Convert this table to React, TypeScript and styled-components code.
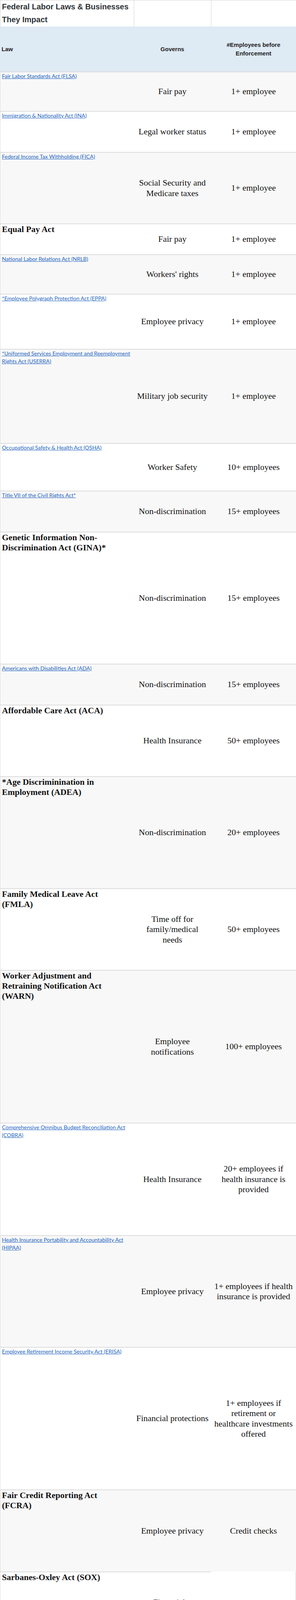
import { createGlobalStyle, styled } from "styled-components";

const GlobalStyle = createGlobalStyle`
  * { box-sizing: border-box; }
  html, body {
    margin: 0;
    padding: 0;
    background: #fff;
  }
`;

type Law = {
  name: string;
  link?: boolean;
  governs: string;
  count?: string;
  h: number;
};

const laws: Law[] = [
  { name: "Fair Labor Standards Act (FLSA)", link: true, governs: "Fair pay", count: "1+ employee", h: 101 },
  { name: "Immigration & Nationality Act (INA)", link: true, governs: "Legal worker status", count: "1+ employee", h: 105 },
  { name: "Federal Income Tax Withholding (FICA)", link: true, governs: "Social Security and\nMedicare taxes", count: "1+ employee", h: 183 },
  { name: "Equal Pay Act", governs: "Fair pay", count: "1+ employee", h: 79 },
  { name: "National Labor Relations Act (NRLB)", link: true, governs: "Workers' rights", count: "1+ employee", h: 101 },
  { name: "*Employee Polygraph Protection Act (EPPA)", link: true, governs: "Employee privacy", count: "1+ employee", h: 141 },
  { name: "*Uniformed Services Employment and Reemployment\nRights Act (USERRA)", link: true, governs: "Military job security", count: "1+ employee", h: 241 },
  { name: "Occupational Safety & Health Act (OSHA)", link: true, governs: "Worker Safety", count: "10+ employees", h: 122 },
  { name: "Title VII of the Civil Rights Act*", link: true, governs: "Non-discrimination", count: "15+ employees", h: 105 },
  { name: "Genetic Information Non-\nDiscrimination Act (GINA)*", governs: "Non-discrimination", count: "15+ employees", h: 338 },
  { name: "Americans with Disabilities Act (ADA)", link: true, governs: "Non-discrimination", count: "15+ employees", h: 105 },
  { name: "Affordable Care Act (ACA)", governs: "Health Insurance", count: "50+ employees", h: 183 },
  { name: "*Age Discriminination in\nEmployment (ADEA)", governs: "Non-discrimination", count: "20+ employees", h: 287 },
  { name: "Family Medical Leave Act\n(FMLA)", governs: "Time off for\nfamily/medical\nneeds", count: "50+ employees", h: 209 },
  { name: "Worker Adjustment and\nRetraining Notification Act\n(WARN)", governs: "Employee\nnotifications", count: "100+ employees", h: 391 },
  { name: "Comprehensive Omnibus Budget Reconciliation Act\n(COBRA)", link: true, governs: "Health Insurance", count: "20+ employees if\nhealth insurance is\nprovided", h: 288 },
  { name: "Health Insurance Portability and Accountability Act\n(HIPAA)", link: true, governs: "Employee privacy", count: "1+ employees if health\ninsurance is provided", h: 286 },
  { name: "Employee Retirement Income Security Act (ERISA)", link: true, governs: "Financial protections", count: "1+ employees if\nretirement or\nhealthcare investments\noffered", h: 365 },
  { name: "Fair Credit Reporting Act\n(FCRA)", governs: "Employee privacy", count: "Credit checks", h: 210 },
  { name: "Sarbanes-Oxley Act (SOX)", governs: "Financial p", h: 156 },
];

export default function App() {
  return (
    <>
      <GlobalStyle />
      <Table>
        <TitleRow>
          <TitleCell>
            Federal Labor Laws &amp; Businesses
            <br />
            They Impact
          </TitleCell>
          <BlankCell />
          <BlankCell />
        </TitleRow>
        <HeadRow>
          <HeadCell>Law</HeadCell>
          <HeadCell $center>Governs</HeadCell>
          <HeadCell $center>#Employees before Enforcement</HeadCell>
        </HeadRow>
        {laws.map((law, i) => (
          <Row key={law.name} $h={law.h} $shade={i % 2 === 0}>
            <LawCell>
              {law.link ? <LawLink href="#">{law.name}</LawLink> : <LawTitle>{law.name}</LawTitle>}
            </LawCell>
            <ValueCell>{law.governs}</ValueCell>
            {law.count ? <ValueCell>{law.count}</ValueCell> : <MissingCell />}
          </Row>
        ))}
        <Footer />
      </Table>
    </>
  );
}

const Table = styled.div`
  width: 759px;
  display: flex;
  flex-direction: column;
`;

const TitleRow = styled.div`
  display: grid;
  grid-template-columns: 343px 198px 218px;
  height: 68px;
  border-top: 1px solid #d4d4d4;
  background: #fff;
  overflow: hidden;
`;

const TitleCell = styled.div`
  padding: 0 4px;
  border-left: 1px solid #d4d4d4;
  white-space: nowrap;
  font-family: "Liberation Sans", Arial, sans-serif;
  font-size: 20px;
  font-weight: 700;
  line-height: 33px;
  color: #2f3337;
`;

const BlankCell = styled.div`
  border-left: 1px solid #d4d4d4;
`;

const HeadRow = styled.div`
  display: grid;
  grid-template-columns: 343px 198px 218px;
  height: 115px;
  background: #deeaf4;
`;

const HeadCell = styled.div<{ $center?: boolean }>`
  display: flex;
  align-items: center;
  justify-content: ${({ $center }) => ($center ? "center" : "flex-start")};
  text-align: ${({ $center }) => ($center ? "center" : "left")};
  padding: 0 4px;
  font-family: "Liberation Sans", Arial, sans-serif;
  font-size: 15px;
  font-weight: 700;
  line-height: 22px;
  color: #1e1e1e;
`;

const Row = styled.div<{ $h: number; $shade: boolean }>`
  display: grid;
  grid-template-columns: 343px 198px 218px;
  height: ${({ $h }) => $h}px;
  background: ${({ $shade }) => ($shade ? "#f8f8f8" : "#fff")};
  overflow: hidden;
`;

const LawCell = styled.div`
  padding: 0 4px;
  border-top: 2px solid #dcdcdc;
  border-left: 1px solid #dcdcdc;
  white-space: pre-line;
  line-height: 20px;
`;

const LawLink = styled.a`
  font-family: Lato, "Liberation Sans", sans-serif;
  font-size: 14px;
  line-height: 20px;
  color: #1f64bf;
  text-decoration: underline;
`;

const LawTitle = styled.div`
  font-family: "Liberation Serif", "Times New Roman", serif;
  font-size: 22px;
  font-weight: 700;
  line-height: 26px;
  color: #111;
`;

const ValueCell = styled.div`
  display: flex;
  align-items: center;
  justify-content: center;
  text-align: center;
  padding: 0 3px;
  border-top: 2px solid #dcdcdc;
  white-space: pre-line;
  font-family: "Liberation Serif", "Times New Roman", serif;
  font-size: 22px;
  line-height: 26.5px;
  color: #111;
`;

const MissingCell = styled.div`
  background: #fff;
  border-right: 1px solid #d0d0d0;
`;

const Footer = styled.div`
  height: 2px;
  background: #deeaf4;
`;
